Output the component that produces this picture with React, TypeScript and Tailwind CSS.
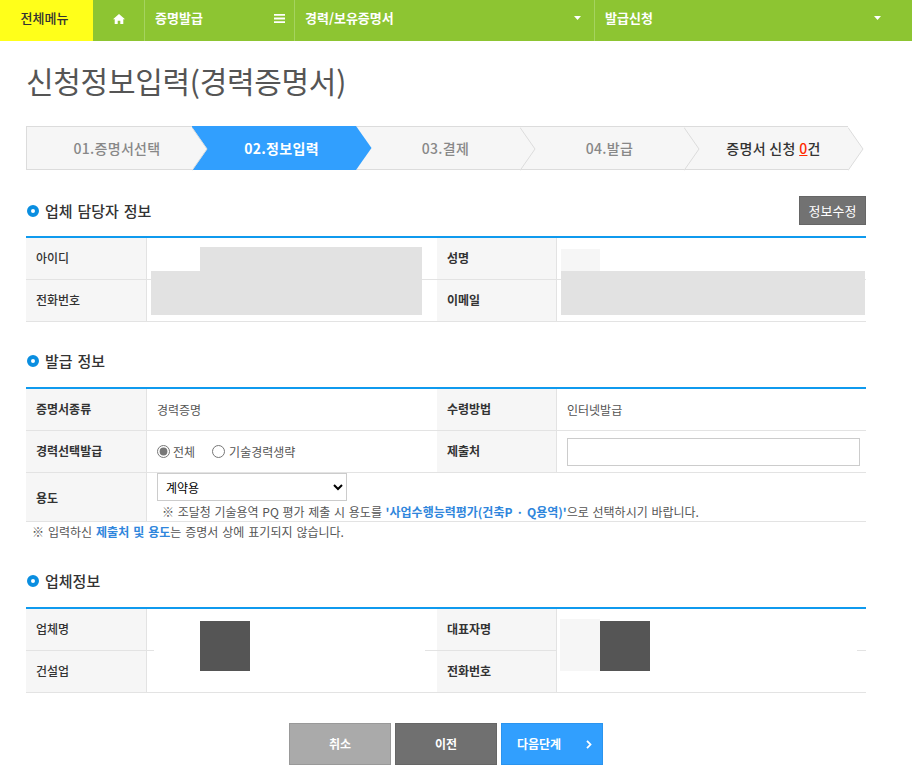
import React from "react";

const font = "font-['Noto_Sans_CJK_KR','Noto_Sans',sans-serif]";

function Caret() {
  return (
    <svg width="7" height="4" viewBox="0 0 7 4" className="shrink-0">
      <path d="M0 0h7L3.5 4z" fill="#fff" />
    </svg>
  );
}

function NavCell({ label, w, icon }: { label: string; w: string; icon: React.ReactNode }) {
  return (
    <div className={`${w} flex items-center justify-between pb-[5px] pl-[10px] border-r border-[#a5d35f] last:border-r-0 text-[13px] font-bold text-white`}>
      <span>{label}</span>
      {icon}
    </div>
  );
}

const steps = [
  { label: "01.증명서선택", kind: "first" },
  { label: "02.정보입력", kind: "active" },
  { label: "03.결제", kind: "" },
  { label: "04.발급", kind: "" },
];

function Arrow({ active }: { active: boolean }) {
  return (
    <svg width="16" height="44" viewBox="0 0 16 44" className="absolute left-full top-0 z-10">
      {active ? (
        <path d="M0 0L15.5 22L0 44z" fill="#319ffe" />
      ) : (
        <path d="M0 .5L15 22L0 43.5" fill="#f6f6f6" stroke="#dcdcdc" strokeWidth="1" />
      )}
    </svg>
  );
}

function Steps() {
  return (
    <div className="flex h-[44px] text-[14px] tracking-[0.3px]">
      {steps.map((s) => (
        <div
          key={s.label}
          className={
            s.kind === "active"
              ? "relative flex w-[164px] items-center justify-center bg-[#319ffe] pl-[15px] font-bold text-white"
              : s.kind === "first"
              ? "relative flex w-[166px] items-center justify-center border-y border-l border-[#dcdcdc] bg-[#f6f6f6] pl-[15px] font-medium text-[#888]"
              : "relative flex w-[164px] items-center justify-center border-y border-[#dcdcdc] bg-[#f6f6f6] pl-[15px] font-medium text-[#888]"
          }
        >
          {s.label}
          <Arrow active={s.kind === "active"} />
        </div>
      ))}
      <div className="relative flex w-[164px] items-center justify-center border-y border-[#dcdcdc] bg-[#f6f6f6] pl-[15px] font-medium text-[#333]">
        <span>
          증명서 신청 <u className="text-[#ff2a00]">0</u>건
        </span>
        <Arrow active={false} />
      </div>
    </div>
  );
}

function Heading({ children }: { children: React.ReactNode }) {
  return (
    <div className="ml-[1px] flex items-center gap-[6px] pt-[1px] text-[15px] font-medium text-[#333] [word-spacing:1.5px]">
      <span className="h-[12px] w-[12px] rounded-full border-[4px] border-[#0a8ee0] bg-white" />
      <span>{children}</span>
    </div>
  );
}

function Label({ children, tall, bold }: { children: React.ReactNode; tall?: boolean; bold?: boolean }) {
  return (
    <div className={`flex ${tall ? "h-[49px] pt-[1px]" : "h-[42px] pb-[2px]"} items-center border-r border-b border-[#e3e3e3] bg-[#f6f6f6] pl-[10px] text-[12px] ${bold ? "font-bold" : "font-medium"} text-[#333]`}>
      {children}
    </div>
  );
}

function Value({ children }: { children?: React.ReactNode }) {
  return (
    <div className="flex h-[42px] items-center border-b border-[#e3e3e3] pl-[10px] text-[12px] text-[#555]">
      {children}
    </div>
  );
}

const grid = "grid grid-cols-[121px_290px_120px_309px] border-t-2 border-[#0f9aee]";

function FlatButton({ label, cls, children }: { label: string; cls: string; children?: React.ReactNode }) {
  return (
    <button className={`flex h-[42px] w-[102px] items-center border text-[12px] font-bold text-white ${cls}`}>
      <span className="flex-1">{label}</span>
      {children}
    </button>
  );
}

export default function App() {
  return (
    <div className={`${font} w-[912px] bg-white pb-[6px]`}>
      <nav className="flex h-[41px] bg-[#8dc532]">
        <div className="flex w-[93px] items-center justify-center bg-[#ffff1a] pr-[4px] pb-[5px] text-[13px] font-medium text-[#333]">
          전체메뉴
        </div>
        <div className="flex w-[52px] items-center justify-center border-r border-[#a5d35f] pb-[3px]">
          <svg width="12" height="10" viewBox="0 0 12 10">
            <path d="M6 0L12 5.2H10.3V10H7.3V6.8H4.7V10H1.7V5.2H0z" fill="#fff" />
          </svg>
        </div>
        <NavCell
          label="증명발급"
          w="w-[150px] pr-[9px]"
          icon={
            <svg width="11" height="9" viewBox="0 0 11 9">
              <path d="M0 0h11v1.8H0zM0 3.6h11v1.8H0zM0 7.2h11V9H0z" fill="#fff" />
            </svg>
          }
        />
        <NavCell label="경력/보유증명서" w="w-[300px] pr-[13px]" icon={<Caret />} />
        <NavCell label="발급신청" w="w-[317px] pr-[31px]" icon={<Caret />} />
      </nav>

      <main className="ml-[26px] w-[840px]">
        <h1 className="flex h-[85px] items-center pb-[7px] text-[30px] font-normal tracking-[-0.3px] text-[#555]">
          신청정보입력(경력증명서)
        </h1>

        <Steps />

        <div className="mt-[26px] mb-[11px] flex h-[29px] items-center justify-between">
          <Heading>업체 담당자 정보</Heading>
          <button className="h-[29px] w-[67px] border border-[#666] bg-[#727272] text-[13px] text-white">
            정보수정
          </button>
        </div>
        <div className={`relative ${grid}`}>
          <Label>아이디</Label>
          <Value />
          <Label bold>성명</Label>
          <Value />
          <Label>전화번호</Label>
          <Value />
          <Label bold>이메일</Label>
          <Value />
          <div className="absolute left-[174px] top-[9px] h-[24px] w-[222px] bg-[#e2e2e2]" />
          <div className="absolute left-[125px] top-[33px] h-[44px] w-[271px] bg-[#e2e2e2]" />
          <div className="absolute left-[535px] top-[11px] h-[22px] w-[39px] bg-[#f6f6f6]" />
          <div className="absolute left-[535px] top-[33px] h-[44px] w-[304px] bg-[#e2e2e2]" />
        </div>

        <div className="mt-[24px] mb-[12px] flex h-[29px] items-center">
          <Heading>발급 정보</Heading>
        </div>
        <div className={grid}>
          <Label bold>증명서종류</Label>
          <Value>경력증명</Value>
          <Label bold>수령방법</Label>
          <Value>인터넷발급</Value>
          <Label bold>경력선택발급</Label>
          <Value>
            <label className="flex items-center gap-[3px]">
              <input type="radio" name="kind" defaultChecked className="m-0 h-[13px] w-[13px] accent-[#777]" />
              전체
            </label>
            <label className="ml-[17px] flex items-center gap-[4px]">
              <input type="radio" name="kind" className="m-0 h-[13px] w-[13px]" />
              기술경력생략
            </label>
          </Value>
          <Label bold>제출처</Label>
          <Value>
            <input className="h-[28px] w-[293px] border border-[#ccc] bg-white" />
          </Value>
          <Label tall bold>용도</Label>
          <div className="col-span-3 flex h-[49px] flex-col border-b border-[#e3e3e3] pl-[10px] text-[12px] text-[#555]">
            <select className="h-[28px] w-[190px] border border-[#ccc] bg-white pl-[4px] text-[12px] text-black">
              <option>계약용</option>
            </select>
            <p className="mt-[2px] pl-[5px] leading-[18px] [word-spacing:1px]">
              ※ 조달청 기술용역 PQ 평가 제출 시 용도를 <b className="text-[#2f86dc]">'사업수행능력평가(건축P · Q용역)'</b>으로 선택하시기 바랍니다.
            </p>
          </div>
        </div>
        <p className="flex h-[20px] items-center pl-[6px] text-[12px] text-[#555] [word-spacing:1.25px]">
          <span>
            ※ 입력하신 <b className="text-[#2f86dc]">제출처 및 용도</b>는 증명서 상에 표기되지 않습니다.
          </span>
        </p>

        <div className="mt-[24px] mb-[12px] flex h-[29px] items-center">
          <Heading>업체정보</Heading>
        </div>
        <div className={`relative ${grid}`}>
          <Label>업체명</Label>
          <Value />
          <Label bold>대표자명</Label>
          <Value />
          <Label>건설업</Label>
          <Value />
          <Label bold>전화번호</Label>
          <Value />
          <div className="absolute left-[128px] top-[10px] h-[70px] w-[271px] bg-white" />
          <div className="absolute left-[174px] top-[12px] h-[50px] w-[50px] bg-[#555]" />
          <div className="absolute left-[531px] top-[10px] h-[70px] w-[300px] bg-white" />
          <div className="absolute left-[534px] top-[10px] h-[52px] w-[40px] bg-[#f6f6f6]" />
          <div className="absolute left-[574px] top-[12px] h-[50px] w-[50px] bg-[#555]" />
        </div>

        <div className="mt-[30px] flex justify-center gap-[4px]">
          <FlatButton label="취소" cls="border-[#999] bg-[#aaa]" />
          <FlatButton label="이전" cls="border-[#666] bg-[#707070]" />
          <FlatButton label="다음단계" cls="border-[#2b94ee] bg-[#319ffe] pl-[15px] text-left">
            <svg width="6" height="9" viewBox="0 0 6 9" className="mr-[10px]">
              <path d="M1 .8L4.5 4.5L1 8.2" fill="none" stroke="#fff" strokeWidth="1.8" />
            </svg>
          </FlatButton>
        </div>
      </main>
    </div>
  );
}
